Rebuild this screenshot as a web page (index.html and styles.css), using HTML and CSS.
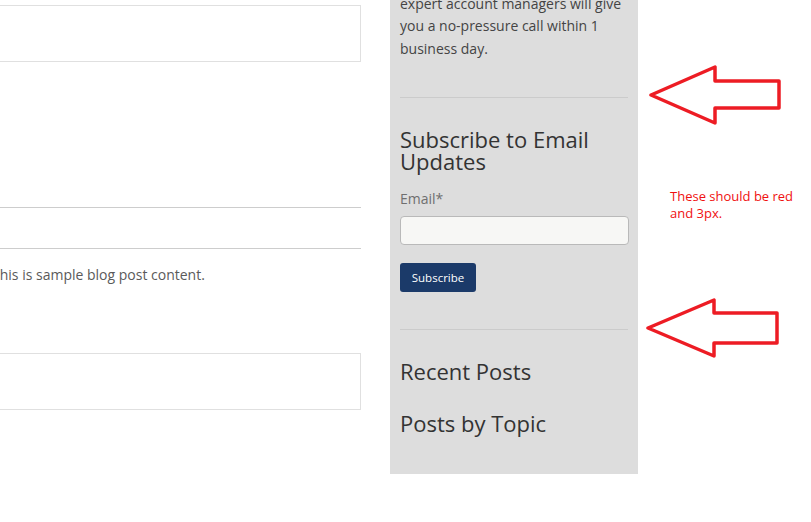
FILE: index.html
```html
<!DOCTYPE html>
<html lang="en">
<head>
    <meta charset="UTF-8">
    <meta name="viewport" content="width=device-width, initial-scale=1.0">
    <title>Blog</title>
    <link rel="stylesheet" href="styles.css">
</head>
<body>

<div class="page">
    <div class="main-col">
        <div class="post-box"></div>
        <hr class="post-rule rule-top">
        <hr class="post-rule rule-bottom">
        <p class="post-body">This is sample blog post content.</p>
        <div class="post-box box-lower"></div>
    </div>

    <aside class="sidebar">
        <p class="side-text">Contact us today and one of our expert account managers will give you a no-pressure call within 1 business day.</p>
        <hr class="side-rule">
        <h3 class="side-title">Subscribe to Email Updates</h3>
        <label class="field-label" for="email">Email*</label>
        <input type="text" id="email" class="field-input">
        <button class="subscribe-btn">Subscribe</button>
        <hr class="side-rule rule-lower">
        <h3 class="side-title recent">Recent Posts</h3>
        <h3 class="side-title topic">Posts by Topic</h3>
    </aside>
</div>

<!-- Review notes drawn over the page -->
<svg class="notes" width="811" height="522" viewBox="0 0 811 522">
    <polygon points="651,95 715,67 715,81 779,81 779,108 715,108 715,123" />
    <polygon points="648,328 714,300 714,313 777,313 777,343 714,343 714,356" />
</svg>
<div class="note-text">These should be red<br>and 3px.</div>

</body>
</html>
```

FILE: styles.css
```css
body {
    font-family: 'Open Sans', 'Liberation Sans', sans-serif;
    background: #fff;
    color: #555;
    margin: 0;
    padding: 0;
    width: 811px;
    height: 522px;
    overflow: hidden;
    position: relative;
}
.page {
    display: flex;
    align-items: flex-start;
    margin-top: -30px;
    margin-left: -8px;
}
.main-col {
    width: 369px;
    margin-right: 29px;
    padding-top: 35px;
}
.post-box {
    height: 55px;
    border: 1px solid #e0e0e0;
}
.post-rule {
    border: none;
    border-top: 1px solid #cdcdcd;
    margin: 0;
}
.rule-top {
    margin-top: 145px;
}
.rule-bottom {
    margin-top: 40px;
}
.post-body {
    font-size: 14px;
    line-height: 20px;
    margin: 16px 0 0;
    color: #5a5a5a;
}
.box-lower {
    margin-top: 68px;
}
.sidebar {
    width: 228px;
    padding: 0 10px 38px;
    background: #dddddd;
}
.side-text {
    font-size: 14px;
    line-height: 22.5px;
    color: #444;
    margin: 0;
}
.side-rule {
    border: none;
    border-top: 1px solid #cbcbcb;
    margin: 37px 0 0;
}
.side-title {
    font-size: 22px;
    line-height: 22px;
    font-weight: 400;
    color: #333;
    margin: 30px 0 0;
}
.field-label {
    display: block;
    font-size: 14px;
    line-height: 20px;
    color: #6f6f6f;
    margin-top: 17px;
}
.field-input {
    display: block;
    box-sizing: border-box;
    width: 229px;
    height: 29px;
    margin-top: 7px;
    background: #f7f7f5;
    border: 1px solid #b9b9b9;
    border-radius: 4px;
}
.subscribe-btn {
    display: block;
    margin-top: 18px;
    width: 76px;
    height: 29px;
    padding: 0;
    background: #1b3a69;
    color: #fff;
    border: none;
    border-radius: 3px;
    font-family: 'Open Sans', 'Liberation Sans', sans-serif;
    font-size: 11.5px;
}
.rule-lower {
    margin-top: 37px;
}
.recent {
    line-height: 26px;
    margin-top: 28px;
}
.topic {
    line-height: 26px;
    margin-top: 26px;
}
.notes {
    position: absolute;
    left: 0;
    top: 0;
    pointer-events: none;
}
.notes polygon {
    fill: none;
    stroke: #ed1c24;
    stroke-width: 3.5;
    stroke-linejoin: round;
}
.note-text {
    position: absolute;
    left: 670px;
    top: 188px;
    font-size: 13px;
    line-height: 17px;
    color: #f01010;
}
```
